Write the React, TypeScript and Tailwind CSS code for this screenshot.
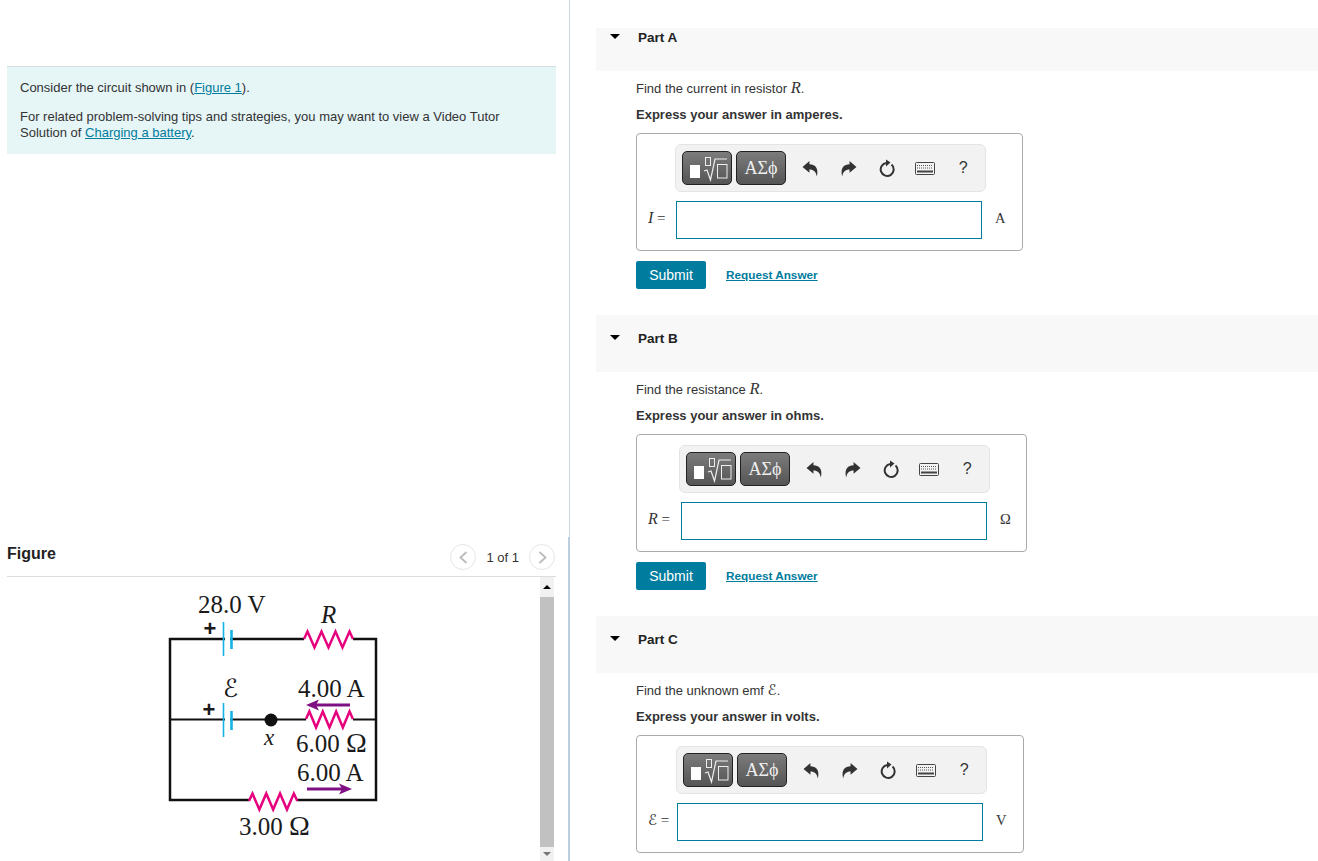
import React from 'react';

const sans = "font-['Liberation_Sans',Arial,sans-serif]";
const serif = "font-['Liberation_Serif','DejaVu_Serif',serif]";
const script = "font-['DejaVu_Sans',sans-serif]";
const link = 'text-[#007c9e] underline';

function UndoIcon({ flip = false }: { flip?: boolean }) {
  return (
    <svg width="17" height="17" viewBox="0 0 16 16" className={flip ? '-scale-x-100' : ''}>
      <path d="M0.5 6.5 L7 1 V4 C12 4 16 7 14 15.5 C13 11 11 9 7 9 V12 Z" fill="#333" />
    </svg>
  );
}

function ResetIcon() {
  return (
    <svg width="18" height="18" viewBox="0 0 18 18">
      <path d="M13.5 5.6 A6.5 6.5 0 1 1 8.5 4" fill="none" stroke="#333" strokeWidth="2" />
      <path d="M8 0.5 L8 7.5 L12.5 3.6 Z" fill="#333" />
    </svg>
  );
}

function KeyboardIcon() {
  return (
    <svg width="20" height="13" viewBox="0 0 20 13">
      <rect x="0.5" y="0.5" width="19" height="12" rx="1" fill="#f3f3f3" stroke="#444" />
      <path d="M2 3.5 H18 M2 6 H18" stroke="#555" strokeWidth="1.2" strokeDasharray="1 1" />
      <path d="M2 9.5 H18" stroke="#444" strokeWidth="2" />
    </svg>
  );
}

function TemplateIcon() {
  return (
    <svg width="48" height="32" viewBox="1 1 48 32">
      <rect x="8" y="14" width="10" height="13" fill="#fff" />
      <rect x="23.5" y="6.5" width="5" height="8" fill="none" stroke="#eee" />
      <path d="M22 20 L25 19 L28.5 29 L33 8 H45" fill="none" stroke="#eee" strokeWidth="1.2" />
      <rect x="35.5" y="13.5" width="9.5" height="13.5" fill="none" stroke="#eee" />
    </svg>
  );
}

function ToolBtn({ children }: { children: React.ReactNode }) {
  return (
    <div className="flex h-[34px] w-[50px] items-center justify-center rounded-[5px] border border-[#222] bg-linear-to-b from-[#7c7c7c] to-[#555]">
      {children}
    </div>
  );
}

function Toolbar({ offset }: { offset: string }) {
  const slot = 'flex w-[38.25px] justify-center';
  return (
    <div className={`${offset} flex h-[48px] w-[311px] items-center rounded-[6px] border border-[#e4e4e4] bg-[#f2f2f2] pl-[6px]`}>
      <ToolBtn>
        <TemplateIcon />
      </ToolBtn>
      <div className="ml-[4px]">
        <ToolBtn>
          <span className={`${serif} text-[18px] text-[#eee]`}>ΑΣϕ</span>
        </ToolBtn>
      </div>
      <div className="ml-[5px] flex items-center">
        <div className={slot}><UndoIcon /></div>
        <div className={slot}><UndoIcon flip /></div>
        <div className={slot}><ResetIcon /></div>
        <div className={slot}><KeyboardIcon /></div>
        <div className={`${slot} text-[16px] text-[#333]`}>?</div>
      </div>
    </div>
  );
}

function Part(props: {
  title: string;
  head: string;
  question: React.ReactNode;
  express: string;
  panelW: string;
  toolbarOffset: string;
  offset: string;
  label: React.ReactNode;
  unit: string;
  last?: boolean;
}) {
  return (
    <section className={props.last ? '' : 'mb-[26px]'}>
      <div className={`${props.head} flex bg-[#f8f8f8] pl-[14px]`}>
        <div className="mt-[4px] h-0 w-0 border-x-[5.5px] border-t-[5px] border-x-transparent border-t-black" />
        <div className="ml-[18px] text-[13.5px] font-bold leading-[15px] text-[#222]">{props.title}</div>
      </div>
      <div className="pl-[40px] pt-[7px]">
        <div className="h-[20px] text-[13px] leading-[20px] text-[#333]">{props.question}</div>
        <div className="mt-[6px] pt-[1px] h-[20px] text-[13px] font-bold leading-[20px] text-[#333]">{props.express}</div>
        <div className={`${props.panelW} mt-[9px] h-[118px] rounded-[4px] border border-[#aaa] pt-[10px]`}>
          <Toolbar offset={props.toolbarOffset} />
          <div className="relative mt-[9px] flex h-[38px] items-center">
            <div className={`${props.offset} h-[38px] w-[306px] border border-[#007c9e] bg-white`} />
            <div className={`${serif} ml-[13px] mt-[-2px] text-[14.5px] text-[#333]`}>{props.unit}</div>
            <div className={`${serif} absolute left-[11px] top-[8px] text-[15px] leading-[18px] text-[#333]`}>{props.label}</div>
          </div>
        </div>
        {props.last ? null : (
          <div className="mt-[10px] flex items-center">
            <div className="flex h-[28px] w-[70px] items-center justify-center rounded-[2px] bg-[#007c9e] text-[14px] text-white">Submit</div>
            <div className={`${link} ml-[20px] text-[11.75px] font-bold`}>Request Answer</div>
          </div>
        )}
      </div>
    </section>
  );
}

// coordinates are offset from the figure's top-left corner on the page
function Circuit() {
  const pink = '#e6007e';
  const cyan = '#16b2e6';
  const purple = '#7f1083';
  const zig = (x: number, y: number, s: number) =>
    `M${x} ${y} l${s / 2} -7.5 l${s} 16 l${s} -16 l${s} 16 l${s} -16 l${s} 16 l${s} -16 l${s / 2} 7.5`;
  return (
    <svg width="533" height="284" viewBox="0 577 533 284" className="block">
      <rect x="170" y="639" width="206" height="161" fill="none" stroke="#111" strokeWidth="2.5" />
      <path d="M170 719.5 H376" stroke="#111" strokeWidth="2" />
      {/* gaps behind batteries and resistors */}
      <rect x="225" y="636" width="5" height="6" fill="#fff" />
      <rect x="225" y="716" width="5" height="7" fill="#fff" />
      <rect x="304" y="636" width="49" height="6" fill="#fff" />
      <rect x="306" y="716" width="47" height="7" fill="#fff" />
      <rect x="249" y="797" width="48" height="6" fill="#fff" />
      <path d="M223.5 622 V656 M223.5 703 V737" stroke={cyan} strokeWidth="1.6" />
      <path d="M231.5 630 V649 M231.5 711 V730" stroke={cyan} strokeWidth="2.6" />
      <path d={zig(304, 639, 7)} fill="none" stroke={pink} strokeWidth="2.5" />
      <path d={zig(306, 719, 6.7)} fill="none" stroke={pink} strokeWidth="2.5" />
      <path d={zig(249, 801, 6.9)} fill="none" stroke={pink} strokeWidth="2.5" />
      <circle cx="271" cy="720" r="6.5" fill="#111" />
      <path d="M350 705 H314" stroke={purple} strokeWidth="3" />
      <path d="M306 705 L319 699.5 L316 705 L319 710.5 Z" fill={purple} />
      <path d="M307 789 H344" stroke={purple} strokeWidth="3" />
      <path d="M352 789 L339 783.5 L342 789 L339 794.5 Z" fill={purple} />
      <g className={serif} fill="#1a1a1a" fontSize="25">
        <text x="198" y="613">28.0 V</text>
        <text x="321" y="623" fontStyle="italic">R</text>
        <text x="223" y="697" fontStyle="italic" className={script}>ℰ</text>
        <text x="298" y="697">4.00 A</text>
        <text x="264" y="745" fontStyle="italic" fontSize="23">x</text>
        <text x="296" y="752">6.00 <tspan fontSize="28">Ω</tspan></text>
        <text x="297" y="781">6.00 A</text>
        <text x="239" y="835">3.00 <tspan fontSize="28">Ω</tspan></text>
      </g>
      <g className={`${sans} font-bold`} fill="#1a1a1a" fontSize="22">
        <text x="203.5" y="636">+</text>
        <text x="202.5" y="717">+</text>
      </g>
    </svg>
  );
}

function PageBtn({ dir }: { dir: 'l' | 'r' }) {
  return (
    <div className="flex h-[26px] w-[26px] items-center justify-center rounded-full border border-[#e6e6e6] bg-white">
      <svg width="9" height="13" viewBox="0 0 9 13">
        <path d={dir === 'l' ? 'M7.5 1 L1.5 6.5 L7.5 12' : 'M1.5 1 L7.5 6.5 L1.5 12'} fill="none" stroke="#bbb" strokeWidth="1.8" />
      </svg>
    </div>
  );
}

export default function App() {
  const mathR = <i className={`${serif} text-[16.5px]`}>R</i>;
  return (
    <div className={`${sans} flex h-[861px] w-[1318px] overflow-hidden bg-white`}>
      <div className="flex h-full w-[568px] shrink-0 flex-col pl-[7px] pr-[12px] pt-[66px]">
        <div className="h-[88px] border-t border-[#d5dfe3] bg-[#e6f5f6] pl-[13px] pr-[40px] pt-[13px] text-[13px] leading-[16px] text-[#333]">
          <p>
            Consider the circuit shown in (<span className={link}>Figure 1</span>).
          </p>
          <p className="mt-[13px]">
            For related problem-solving tips and strategies, you may want to view a Video Tutor Solution of{' '}
            <span className={link}>Charging a battery</span>.
          </p>
        </div>
        <div className="mt-[390px] flex h-[33px] items-start justify-between border-b border-[#ddd] pr-[1px]">
          <div className="text-[16px] font-bold leading-[20px] text-[#222]">Figure</div>
          <div className="flex items-center text-[13px] text-[#333]">
            <PageBtn dir="l" />
            <span className="mx-[10px] mt-[1px]">1 of 1</span>
            <PageBtn dir="r" />
          </div>
        </div>
        <div className="flex min-h-0 flex-1">
          <div className="-ml-[7px] min-w-0 flex-1 overflow-hidden">
            <Circuit />
          </div>
          <div className="mr-[2px] flex w-[14px] flex-col items-center bg-[#f1f1f1]">
            <div className="flex h-[20px] items-center">
              <div className="h-0 w-0 border-x-[4px] border-b-[4px] border-x-transparent border-b-black" />
            </div>
            <div className="w-full flex-1 bg-[#c1c1c1]" />
            <div className="flex h-[14px] items-center">
              <div className="h-0 w-0 border-x-[4px] border-t-[4px] border-x-transparent border-t-[#777]" />
            </div>
          </div>
        </div>
      </div>
      <div className="flex h-full w-[2px] shrink-0 flex-col">
        <div className="ml-[1px] h-[537px] w-[1px] bg-[#cfd6dc]" />
        <div className="flex-1 bg-[#bccfe1]" />
      </div>
      <div className="ml-[26px] flex-1 pt-[28px]">
        <Part
          title="Part A"
          head="h-[43px] pt-[2px]"
          question={<>Find the current in resistor {mathR}.</>}
          express="Express your answer in amperes."
          panelW="w-[387px]"
          toolbarOffset="ml-[38px]"
          offset="ml-[39px]"
          label={<><i className="text-[16px]">I</i> =</>}
          unit="A"
        />
        <Part
          title="Part B"
          head="h-[57px] pt-[16px]"
          question={<>Find the resistance {mathR}.</>}
          express="Express your answer in ohms."
          panelW="w-[391px]"
          toolbarOffset="ml-[42px]"
          offset="ml-[44px]"
          label={<><i className="text-[16px]">R</i> =</>}
          unit="Ω"
        />
        <Part
          title="Part C"
          head="h-[57px] pt-[16px]"
          question={<>Find the unknown emf <i className={`${script} text-[15px]`}>ℰ</i>.</>}
          express="Express your answer in volts."
          panelW="w-[388px]"
          toolbarOffset="ml-[39px]"
          offset="ml-[40px]"
          label={<><i className={`${script} text-[15px]`}>ℰ</i> =</>}
          unit="V"
          last
        />
      </div>
    </div>
  );
}
